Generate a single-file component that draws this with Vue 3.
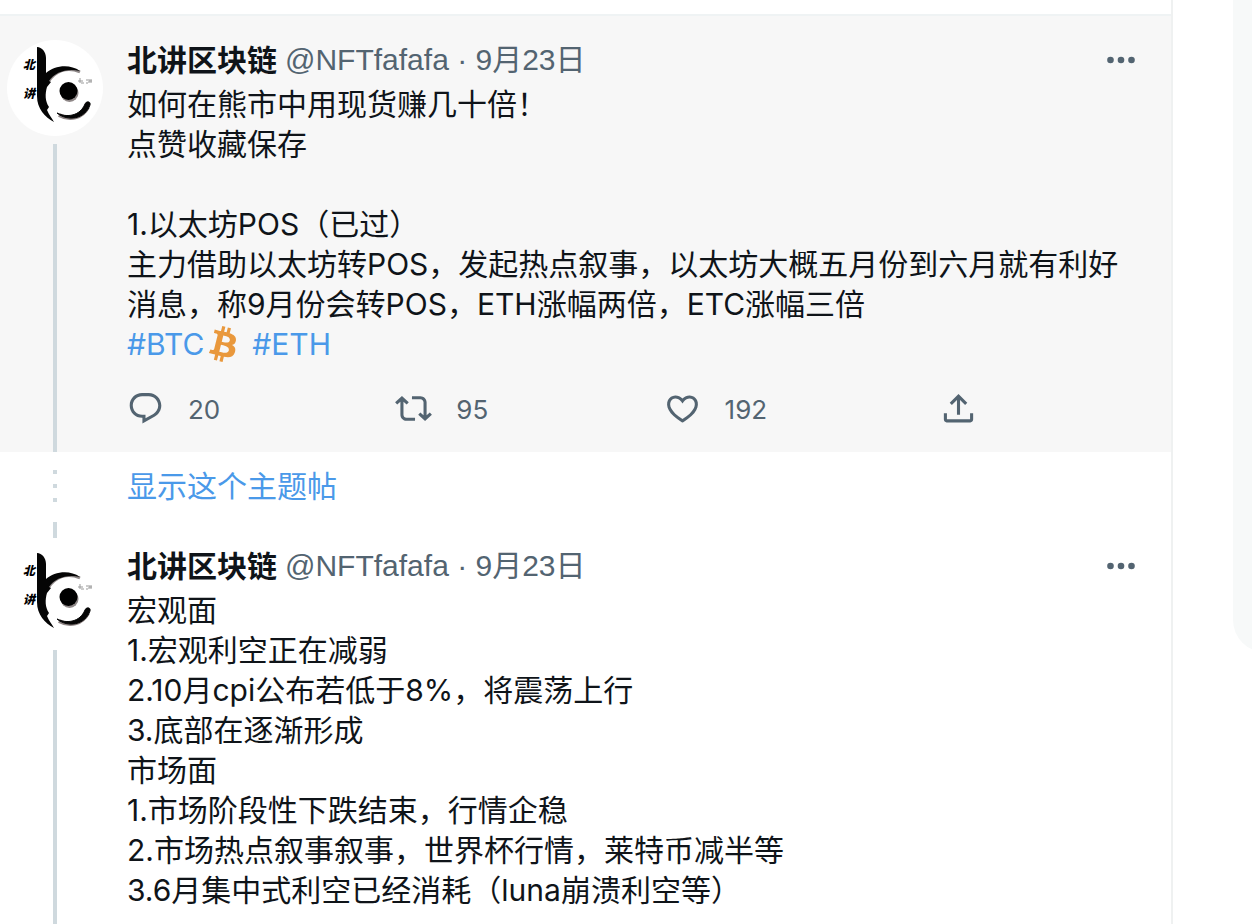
<script setup>
const tweets = [
  {
    id: 1,
    active: true,
    lines: [
      '如何在熊市中用现货赚几十倍！',
      '点赞收藏保存',
      '',
      '1.以太坊POS（已过）',
      '主力借助以太坊转POS，发起热点叙事，以太坊大概五月份到六月就有利好消息，称9月份会转POS，ETH涨幅两倍，ETC涨幅三倍',
    ],
    tags: true,
  },
  {
    id: 2,
    active: false,
    lines: [
      '宏观面',
      '1.宏观利空正在减弱',
      '2.10月cpi公布若低于8%，将震荡上行',
      '3.底部在逐渐形成',
      '市场面',
      '1.市场阶段性下跌结束，行情企稳',
      '2.市场热点叙事叙事，世界杯行情，莱特币减半等',
      '3.6月集中式利空已经消耗（luna崩溃利空等）',
    ],
    tags: false,
  },
]

const actions = [
  {
    label: '回复',
    count: 20,
    path: 'M1.751 10c0-4.42 3.584-8 8.005-8h4.366c4.49 0 8.129 3.64 8.129 8.13 0 2.96-1.607 5.68-4.196 7.11l-8.054 4.46v-3.69h-.067c-4.49.1-8.183-3.51-8.183-8.01zm8.005-6c-3.317 0-6.005 2.69-6.005 6 0 3.37 2.77 6.08 6.138 6.01l.351-.01h1.761v2.3l5.087-2.81c1.951-1.08 3.163-3.13 3.163-5.36 0-3.39-2.744-6.13-6.129-6.13H9.756z',
  },
  {
    label: '转推',
    count: 95,
    path: 'M4.5 3.88l4.432 4.14-1.364 1.46L5.5 7.55V16c0 1.1.896 2 2 2H13v2H7.5c-2.209 0-4-1.79-4-4V7.55L1.432 9.48.068 8.02 4.5 3.88zM16.5 6H11V4h5.5c2.209 0 4 1.79 4 4v8.45l2.068-1.93 1.364 1.46-4.432 4.14-4.432-4.14 1.364-1.46 2.068 1.93V8c0-1.1-.896-2-2-2z',
  },
  {
    label: '喜欢',
    count: 192,
    path: 'M16.697 5.5c-1.222-.06-2.679.51-3.89 2.16l-.805 1.09-.806-1.09C9.984 6.01 8.526 5.44 7.304 5.5c-1.243.07-2.349.78-2.91 1.91-.552 1.12-.633 2.78.479 4.82 1.074 1.97 3.257 4.27 7.129 6.61 3.87-2.34 6.052-4.64 7.126-6.61 1.111-2.04 1.03-3.7.477-4.82-.561-1.13-1.666-1.84-2.908-1.91zm4.187 7.69c-1.351 2.48-4.001 5.12-8.379 7.67l-.503.3-.504-.3c-4.379-2.55-7.029-5.19-8.382-7.67-1.36-2.5-1.41-4.86-.514-6.67.887-1.79 2.647-2.91 4.601-3.01 1.651-.09 3.368.56 4.798 2.01 1.429-1.45 3.146-2.1 4.796-2.01 1.954.1 3.714 1.22 4.601 3.01.896 1.81.846 4.17-.514 6.67z',
  },
  {
    label: '分享',
    count: null,
    path: 'M12 2.59l5.7 5.7-1.41 1.42L13 6.41V16h-2V6.41l-3.3 3.3-1.41-1.42L12 2.59zM21.500 15v4.2c0 1-.8 1.8-1.8 1.8H4.3C3.300 21 2.500 20.200 2.500 19.200V15h2v4h15v-4h2z',
  },
]
</script>

<template>
  <div class="page">
    <main class="timeline">
      <template v-for="tweet in tweets" :key="tweet.id">
        <article class="tweet" :class="{ active: tweet.active }">
          <div class="rail">
            <svg class="avatar" viewBox="0 0 96 96" role="img" aria-label="北讲区块链">
              <circle cx="48" cy="48" r="48" fill="#fff" />
              <path d="M41 42C48 31 60 26 73 32" fill="none" stroke="#8f8888" stroke-width="3" />
              <path d="M39 33C47 26 62 23 73 31C60 28 48 32 42 41L44 42L40 47C38 54 38 61 42 67L40 70C42 75 45 78 47 82C38 77 30 69 30 56V7C35 7 39 12 39 18V33Z" fill="#050505" />
              <circle cx="62.500" cy="53" r="9" fill="#8f8888" />
              <circle cx="61.500" cy="51" r="9" fill="#000" />
              <path d="M52 75C63 81 75 78 81 67" fill="none" stroke="#8f8585" stroke-width="4" />
              <path d="M50 73C60 78 73 76 78 64C79 61 84 61 83 65C78 79 61 82 50 73Z" fill="#050505" stroke="#050505" />
              <path d="M71 41h5M73 38v5M74 43h3M79 40h2M79 43h2M82 39v4M84 39v4M82 41h3" fill="none" stroke="#999" stroke-width="1" />
              <text x="16" y="29" class="seal">北</text>
              <text x="16" y="58" class="seal">讲</text>
            </svg>
            <span class="thread-line"></span>
          </div>

          <div class="body">
            <header class="head">
              <a href="#" class="name">北讲区块链</a>
              <span class="meta">@NFTfafafa · 9月23日</span>
              <button type="button" class="more" aria-label="更多">
                <svg viewBox="0 0 28 8" class="dots">
                  <circle cx="3.500" cy="4" r="3.300" />
                  <circle cx="14" cy="4" r="3.300" />
                  <circle cx="24.500" cy="4" r="3.300" />
                </svg>
              </button>
            </header>

            <div class="text">
              <p v-for="(line, i) in tweet.lines" :key="i">{{ line }}</p>
              <p v-if="tweet.tags" class="tags">
                <a href="#">#BTC<svg class="coin" viewBox="8 6 16 20" aria-hidden="true"><path d="M23.189 14.02c.314-2.096-1.283-3.223-3.465-3.975l.708-2.84-1.728-.43-.69 2.765c-.454-.114-.92-.22-1.385-.326l.695-2.783L15.596 6l-.708 2.839c-.376-.086-.746-.17-1.104-.26l.002-.009-2.384-.595-.46 1.846s1.283.294 1.256.312c.7.175.826.638.805 1.006l-.806 3.235c.048.012.11.03.18.057l-.183-.045-1.13 4.532c-.086.212-.303.531-.793.41.018.025-1.256-.313-1.256-.313l-.858 1.978 2.25.561c.418.105.828.215 1.231.318l-.715 2.872 1.727.43.708-2.84c.472.127.93.245 1.378.357l-.706 2.828 1.728.43.715-2.866c2.948.558 5.164.333 6.097-2.333.752-2.146-.037-3.385-1.588-4.192 1.13-.26 1.98-1.003 2.207-2.538zm-3.95 5.538c-.533 2.147-4.148.986-5.32.695l.95-3.805c1.172.293 4.929.872 4.37 3.11zm.535-5.569c-.487 1.953-3.495.96-4.47.717l.86-3.45c.975.243 4.118.696 3.61 2.733z" /></svg></a>
                <a href="#">#ETH</a>
              </p>
            </div>

            <div v-if="tweet.active" class="actions">
              <button v-for="a in actions" :key="a.label" type="button" class="action" :aria-label="a.label">
                <svg viewBox="0 0 24 24" class="icon"><path :d="a.path" /></svg>
                <span v-if="a.count !== null">{{ a.count }}</span>
              </button>
            </div>
          </div>
        </article>

        <div v-if="tweet.active" class="show-thread">
          <div class="gap-dots"><i></i><i></i><i></i><b></b></div>
          <a href="#">显示这个主题帖</a>
        </div>
      </template>
    </main>
    <aside class="side"><div class="panel"></div></aside>
  </div>
</template>

<style>
body {
  margin: 0;
  background: #fff;
}
</style>

<style scoped>
.page {
  display: grid;
  grid-template-columns: minmax(0, 1fr) 79px;
  height: 100vh;
  overflow: hidden;
  color: #0f1419;
  font: 30px/40px Inter, "Noto Sans CJK SC", sans-serif;
}
a {
  color: #4a99e9;
  text-decoration: none;
}
button {
  padding: 0;
  border: 0;
  background: none;
  color: #536471;
  font: inherit;
}
p {
  margin: 0;
  min-height: 40px;
}
.timeline {
  display: flex;
  flex-direction: column;
  padding-top: 14px;
  border-right: 2px solid #eff1f1;
}
.tweet {
  display: flex;
  gap: 24px;
  padding: 0 32px 0 7px;
}
.tweet.active {
  padding-top: 24px;
  border-top: 2px solid #eff3f4;
  background: #f7f7f7;
}
.tweet:not(.active) {
  flex: 1;
}
.rail {
  display: flex;
  flex-direction: column;
  align-items: center;
  gap: 8px;
  width: 96px;
  flex: none;
}
.avatar {
  width: 96px;
  height: 96px;
}
.seal {
  font: italic 900 12px "Noto Sans CJK SC", sans-serif;
}
.thread-line {
  flex: 1;
  width: 4px;
  background: #cfd9de;
}
.body {
  flex: 1;
  min-width: 0;
}
.head {
  display: flex;
  gap: 8px;
  height: 40px;
  margin-bottom: 4px;
  white-space: nowrap;
}
.name {
  color: #0f1419;
  font-weight: 700;
}
.meta {
  color: #536471;
  font-family: "Liberation Sans", "Noto Sans CJK SC", sans-serif;
}
.more {
  display: flex;
  align-items: center;
  margin-left: auto;
  padding-right: 4px;
}
.dots {
  width: 28px;
  height: 8px;
  fill: currentColor;
}
.tags {
  display: flex;
  gap: 14px;
}
.tags a {
  display: flex;
  align-items: center;
  gap: 4px;
}
.coin {
  width: 30px;
  height: 36px;
  fill: #e9983c;
}
.actions {
  display: grid;
  grid-template-columns: 33fr 33fr 34fr auto;
  max-width: 850px;
  padding: 24px 0;
}
.action {
  display: flex;
  align-items: center;
  gap: 24px;
  height: 40px;
  font-size: 26px;
}
.action span {
  padding-top: 4px;
}
.icon {
  width: 37px;
  height: 37px;
  fill: currentColor;
}
.show-thread {
  display: flex;
  gap: 24px;
  height: 94px;
  padding-left: 7px;
}
.show-thread a {
  margin-top: 14px;
}
.gap-dots {
  display: flex;
  flex-direction: column;
  align-items: center;
  gap: 10px;
  width: 96px;
  padding-top: 18px;
  box-sizing: border-box;
}
.gap-dots i,
.gap-dots b {
  width: 4px;
  height: 4px;
  background: #cfd9de;
}
.gap-dots b {
  height: 16px;
  margin-top: 10px;
}
.side {
  padding-left: 60px;
  overflow: hidden;
}
.panel {
  width: 700px;
  height: 652px;
  border-radius: 0 0 32px 32px;
  background: #f7f9f9;
}
</style>
